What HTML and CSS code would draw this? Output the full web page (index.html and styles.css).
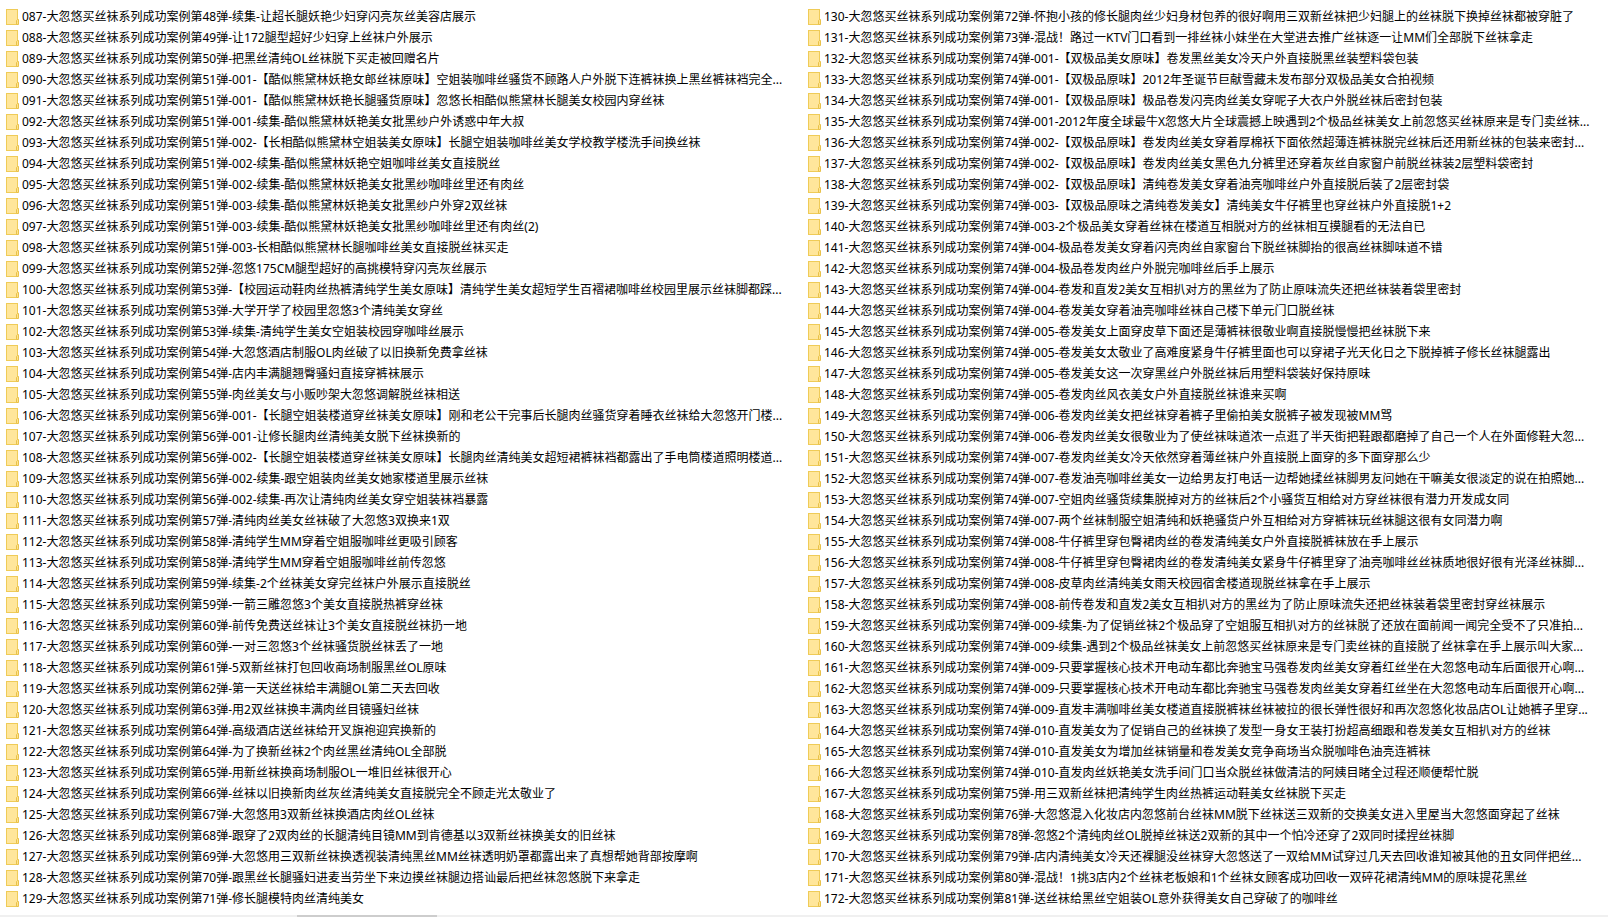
FILE: index.html
```html
<!DOCTYPE html>
<html lang="zh-CN">
<head>
  <meta charset="UTF-8">
  <meta name="viewport" content="width=device-width, initial-scale=1.0">
  <title>文件夹</title>
  <link rel="stylesheet" href="styles.css">
</head>
<body>
  <!-- Folder icon shared by every row -->
  <svg class="sprite" aria-hidden="true">
    <symbol id="folder" viewBox="0 0 13 16">
      <rect x="0.5" y="0.5" width="11" height="15" fill="#ffe69b" stroke="#efcb57"/>
      <path d="M10.5 15.5V11.5L11.5 10.5H12.5V15.5Z" fill="#ffe38c" stroke="#e8c14a"/>
    </symbol>
  </svg>

  <main class="file-list">
    <ul class="column" id="leftColumn"></ul>
    <ul class="column" id="rightColumn"></ul>
  </main>

  <div class="scrollbar">
    <div class="thumb"></div>
  </div>

  <script src="script.js"></script>
</body>
</html>
```
FILE: styles.css
```css
/* Basic Reset */
* {
  margin: 0;
  padding: 0;
  box-sizing: border-box;
}

/* Page Styling */
body {
  display: flex;
  flex-direction: column;
  min-height: 100vh;
  background-color: #fff;
  color: #000;
  font-family: "Noto Sans", "Noto Sans CJK SC", sans-serif;
  font-size: 12px;
}

.sprite {
  position: absolute;
  width: 0;
  height: 0;
}

/* Two columns of folders */
.file-list {
  flex: 1;
  display: grid;
  grid-template-columns: 1fr 1fr;
  padding-top: 6px;
}

.column {
  list-style: none;
  min-width: 0;
  padding-left: 6px;
}

.column + .column {
  padding-left: 4px;
}

.item {
  display: flex;
  align-items: center;
  gap: 3px;
  height: 21px;
  line-height: 21px;
  color: inherit;
  text-decoration: none;
  white-space: nowrap;
}

.item:hover {
  background-color: #e5f3ff;
}

.icon {
  flex: none;
  width: 13px;
  height: 16px;
}

/* Horizontal scrollbar at the bottom */
.scrollbar {
  height: 2px;
  background-color: #f0f0f0;
  padding-left: 297px;
}

.thumb {
  width: 140px;
  height: 2px;
  background-color: #cdcdcd;
}
```
FILE: script.js
```javascript
const PREFIX = "大忽悠买丝袜系列成功案例第";

// Each entry is the part of the folder name after the prefix
const left = [
  "48弹-续集-让超长腿妖艳少妇穿闪亮灰丝美容店展示",
  "49弹-让172腿型超好少妇穿上丝袜户外展示",
  "50弹-把黑丝清纯OL丝袜脱下买走被回赠名片",
  "51弹-001-【酷似熊黛林妖艳女郎丝袜原味】空姐装咖啡丝骚货不顾路人户外脱下连裤袜换上黑丝裤袜裆完全...",
  "51弹-001-【酷似熊黛林妖艳长腿骚货原味】忽悠长相酷似熊黛林长腿美女校园内穿丝袜",
  "51弹-001-续集-酷似熊黛林妖艳美女批黑纱户外诱惑中年大叔",
  "51弹-002-【长相酷似熊黛林空姐装美女原味】长腿空姐装咖啡丝美女学校教学楼洗手间换丝袜",
  "51弹-002-续集-酷似熊黛林妖艳空姐咖啡丝美女直接脱丝",
  "51弹-002-续集-酷似熊黛林妖艳美女批黑纱咖啡丝里还有肉丝",
  "51弹-003-续集-酷似熊黛林妖艳美女批黑纱户外穿2双丝袜",
  "51弹-003-续集-酷似熊黛林妖艳美女批黑纱咖啡丝里还有肉丝(2)",
  "51弹-003-长相酷似熊黛林长腿咖啡丝美女直接脱丝袜买走",
  "52弹-忽悠175CM腿型超好的高挑模特穿闪亮灰丝展示",
  "53弹-【校园运动鞋肉丝热裤清纯学生美女原味】清纯学生美女超短学生百褶裙咖啡丝校园里展示丝袜脚都踩...",
  "53弹-大学开学了校园里忽悠3个清纯美女穿丝",
  "53弹-续集-清纯学生美女空姐装校园穿咖啡丝展示",
  "54弹-大忽悠酒店制服OL肉丝破了以旧换新免费拿丝袜",
  "54弹-店内丰满腿翘臀骚妇直接穿裤袜展示",
  "55弹-肉丝美女与小贩吵架大忽悠调解脱丝袜相送",
  "56弹-001-【长腿空姐装楼道穿丝袜美女原味】刚和老公干完事后长腿肉丝骚货穿着睡衣丝袜给大忽悠开门楼...",
  "56弹-001-让修长腿肉丝清纯美女脱下丝袜换新的",
  "56弹-002-【长腿空姐装楼道穿丝袜美女原味】长腿肉丝清纯美女超短裙裤袜裆都露出了手电筒楼道照明楼道...",
  "56弹-002-续集-跟空姐装肉丝美女她家楼道里展示丝袜",
  "56弹-002-续集-再次让清纯肉丝美女穿空姐装袜裆暴露",
  "57弹-清纯肉丝美女丝袜破了大忽悠3双换来1双",
  "58弹-清纯学生MM穿着空姐服咖啡丝更吸引顾客",
  "58弹-清纯学生MM穿着空姐服咖啡丝前传忽悠",
  "59弹-续集-2个丝袜美女穿完丝袜户外展示直接脱丝",
  "59弹-一箭三雕忽悠3个美女直接脱热裤穿丝袜",
  "60弹-前传免费送丝袜让3个美女直接脱丝袜扔一地",
  "60弹-一对三忽悠3个丝袜骚货脱丝袜丢了一地",
  "61弹-5双新丝袜打包回收商场制服黑丝OL原味",
  "62弹-第一天送丝袜给丰满腿OL第二天去回收",
  "63弹-用2双丝袜换丰满肉丝目镜骚妇丝袜",
  "64弹-高级酒店送丝袜给开叉旗袍迎宾换新的",
  "64弹-为了换新丝袜2个肉丝黑丝清纯OL全部脱",
  "65弹-用新丝袜换商场制服OL一堆旧丝袜很开心",
  "66弹-丝袜以旧换新肉丝灰丝清纯美女直接脱完全不顾走光太敬业了",
  "67弹-大忽悠用3双新丝袜换酒店肉丝OL丝袜",
  "68弹-跟穿了2双肉丝的长腿清纯目镜MM到肯德基以3双新丝袜换美女的旧丝袜",
  "69弹-大忽悠用三双新丝袜换透视装清纯黑丝MM丝袜透明奶罩都露出来了真想帮她背部按摩啊",
  "70弹-跟黑丝长腿骚妇进麦当劳坐下来边摸丝袜腿边搭讪最后把丝袜忽悠脱下来拿走",
  "71弹-修长腿模特肉丝清纯美女"
];

const right = [
  "72弹-怀抱小孩的修长腿肉丝少妇身材包养的很好啊用三双新丝袜把少妇腿上的丝袜脱下换掉丝袜都被穿脏了",
  "73弹-混战！路过一KTV门口看到一排丝袜小妹坐在大堂进去推广丝袜逐一让MM们全部脱下丝袜拿走",
  "74弹-001-【双极品美女原味】卷发黑丝美女冷天户外直接脱黑丝装塑料袋包装",
  "74弹-001-【双极品原味】2012年圣诞节巨献雪藏未发布部分双极品美女合拍视频",
  "74弹-001-【双极品原味】极品卷发闪亮肉丝美女穿呢子大衣户外脱丝袜后密封包装",
  "74弹-001-2012年度全球最牛X忽悠大片全球震撼上映遇到2个极品丝袜美女上前忽悠买丝袜原来是专门卖丝袜...",
  "74弹-002-【双极品原味】卷发肉丝美女穿着厚棉袄下面依然超薄连裤袜脱完丝袜后还用新丝袜的包装来密封...",
  "74弹-002-【双极品原味】卷发肉丝美女黑色九分裤里还穿着灰丝自家窗户前脱丝袜装2层塑料袋密封",
  "74弹-002-【双极品原味】清纯卷发美女穿着油亮咖啡丝户外直接脱后装了2层密封袋",
  "74弹-003-【双极品原味之清纯卷发美女】清纯美女牛仔裤里也穿丝袜户外直接脱1+2",
  "74弹-003-2个极品美女穿着丝袜在楼道互相脱对方的丝袜相互摸腿看的无法自已",
  "74弹-004-极品卷发美女穿着闪亮肉丝自家窗台下脱丝袜脚抬的很高丝袜脚味道不错",
  "74弹-004-极品卷发肉丝户外脱完咖啡丝后手上展示",
  "74弹-004-卷发和直发2美女互相扒对方的黑丝为了防止原味流失还把丝袜装着袋里密封",
  "74弹-004-卷发美女穿着油亮咖啡丝袜自己楼下单元门口脱丝袜",
  "74弹-005-卷发美女上面穿皮草下面还是薄裤袜很敬业啊直接脱慢慢把丝袜脱下来",
  "74弹-005-卷发美女太敬业了高难度紧身牛仔裤里面也可以穿裙子光天化日之下脱掉裤子修长丝袜腿露出",
  "74弹-005-卷发美女这一次穿黑丝户外脱丝袜后用塑料袋装好保持原味",
  "74弹-005-卷发肉丝风衣美女户外直接脱丝袜谁来买啊",
  "74弹-006-卷发肉丝美女把丝袜穿着裤子里偷拍美女脱裤子被发现被MM骂",
  "74弹-006-卷发肉丝美女很敬业为了使丝袜味道浓一点逛了半天街把鞋跟都磨掉了自己一个人在外面修鞋大忽...",
  "74弹-007-卷发肉丝美女冷天依然穿着薄丝袜户外直接脱上面穿的多下面穿那么少",
  "74弹-007-卷发油亮咖啡丝美女一边给男友打电话一边帮她揉丝袜脚男友问她在干嘛美女很淡定的说在拍照她...",
  "74弹-007-空姐肉丝骚货续集脱掉对方的丝袜后2个小骚货互相给对方穿丝袜很有潜力开发成女同",
  "74弹-007-两个丝袜制服空姐清纯和妖艳骚货户外互相给对方穿裤袜玩丝袜腿这很有女同潜力啊",
  "74弹-008-牛仔裤里穿包臀裙肉丝的卷发清纯美女户外直接脱裤袜放在手上展示",
  "74弹-008-牛仔裤里穿包臀裙肉丝的卷发清纯美女紧身牛仔裤里穿了油亮咖啡丝丝袜质地很好很有光泽丝袜脚...",
  "74弹-008-皮草肉丝清纯美女雨天校园宿舍楼道现脱丝袜拿在手上展示",
  "74弹-008-前传卷发和直发2美女互相扒对方的黑丝为了防止原味流失还把丝袜装着袋里密封穿丝袜展示",
  "74弹-009-续集-为了促销丝袜2个极品穿了空姐服互相扒对方的丝袜脱了还放在面前闻一闻完全受不了只准拍...",
  "74弹-009-续集-遇到2个极品丝袜美女上前忽悠买丝袜原来是专门卖丝袜的直接脱了丝袜拿在手上展示叫大家...",
  "74弹-009-只要掌握核心技术开电动车都比奔驰宝马强卷发肉丝美女穿着红丝坐在大忽悠电动车后面很开心啊...",
  "74弹-009-只要掌握核心技术开电动车都比奔驰宝马强卷发肉丝美女穿着红丝坐在大忽悠电动车后面很开心啊...",
  "74弹-009-直发丰满咖啡丝美女楼道直接脱裤袜丝袜被拉的很长弹性很好和再次忽悠化妆品店OL让她裤子里穿...",
  "74弹-010-直发美女为了促销自己的丝袜换了发型一身女王装打扮超高细跟和卷发美女互相扒对方的丝袜",
  "74弹-010-直发美女为增加丝袜销量和卷发美女竞争商场当众脱咖啡色油亮连裤袜",
  "74弹-010-直发肉丝妖艳美女洗手间门口当众脱丝袜做清洁的阿姨目睹全过程还顺便帮忙脱",
  "75弹-用三双新丝袜把清纯学生肉丝热裤运动鞋美女丝袜脱下买走",
  "76弹-大忽悠混入化妆店内忽悠前台丝袜MM脱下丝袜送三双新的交换美女进入里屋当大忽悠面穿起了丝袜",
  "78弹-忽悠2个清纯肉丝OL脱掉丝袜送2双新的其中一个怕冷还穿了2双同时揉捏丝袜脚",
  "79弹-店内清纯美女冷天还裸腿没丝袜穿大忽悠送了一双给MM试穿过几天去回收谁知被其他的丑女同伴把丝...",
  "80弹-混战！1挑3店内2个丝袜老板娘和1个丝袜女顾客成功回收一双碎花裙清纯MM的原味提花黑丝",
  "81弹-送丝袜给黑丝空姐装OL意外获得美女自己穿破了的咖啡丝"
];

// Fill one column, numbering the folders from "start"
function fillColumn(id, names, start) {
  document.getElementById(id).innerHTML = names.map((name, i) => {
    const number = String(start + i).padStart(3, "0");
    return `<li><a class="item" href="#${number}"><svg class="icon" aria-hidden="true"><use href="#folder"/></svg><span>${number}-${PREFIX}${name}</span></a></li>`;
  }).join("");
}

fillColumn("leftColumn", left, 87);
fillColumn("rightColumn", right, 130);
```
